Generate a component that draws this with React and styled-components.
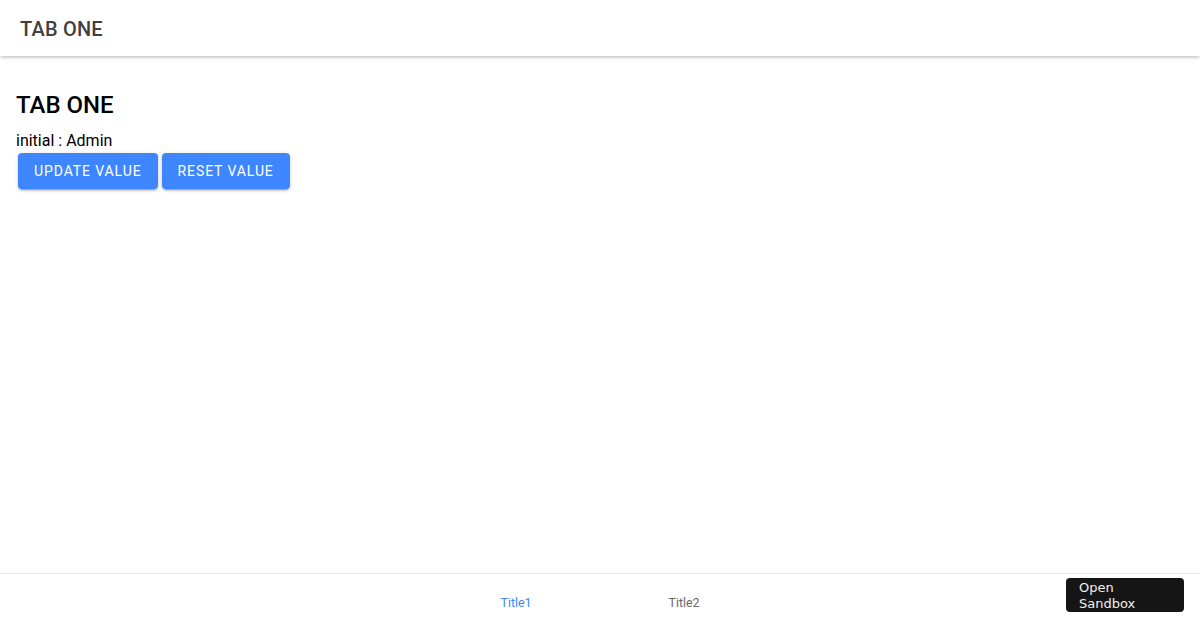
import React from "react";
import styled, { createGlobalStyle } from "styled-components";

const Global = createGlobalStyle`
  html, body { margin: 0; padding: 0; height: 100%; }
  body { font-family: Roboto, "Liberation Sans", sans-serif; background: #fff; color: #000; }
  #root { height: 100%; }
`;

const Page = styled.div`
  height: 630px;
  display: flex;
  flex-direction: column;
  position: relative;
  overflow: hidden;
`;

const Header = styled.header`
  height: 56px;
  flex: none;
  display: flex;
  align-items: center;
  padding: 0 20px;
  background: #fff;
  box-shadow: 0 2px 4px -1px rgba(0,0,0,0.2), 0 1px 3px 0 rgba(0,0,0,0.12);
  position: relative;
  z-index: 1;
`;

const HeaderTitle = styled.div`
  font-size: 20px;
  font-weight: 500;
  color: #404040;
  letter-spacing: 0.01em;
  padding-top: 1px;
`;

const Content = styled.main`
  flex: 1;
  padding: 33px 16px 0;
`;

const Heading = styled.h2`
  margin: 0 0 8px;
  font-size: 24px;
  font-weight: 500;
  line-height: 32px;
  color: #000;
`;

const Info = styled.div`
  font-size: 16px;
  line-height: 24px;
`;

const Actions = styled.div`
  display: flex;
  gap: 4px;
  padding-left: 2px;
`;

const Button = styled.button`
  height: 36px;
  padding: 6px 16px;
  border: none;
  border-radius: 4px;
  background: #3d86fe;
  color: #fff;
  font-family: Roboto, "Liberation Sans", sans-serif;
  font-size: 14px;
  font-weight: 400;
  letter-spacing: 0.9px;
  text-transform: uppercase;
  box-shadow: 0 3px 1px -2px rgba(0,0,0,0.2), 0 2px 2px 0 rgba(0,0,0,0.14), 0 1px 5px 0 rgba(0,0,0,0.12);
  cursor: pointer;
`;

const BottomNav = styled.nav`
  height: 56px;
  flex: none;
  border-top: 1px solid #e8e8e8;
  display: flex;
  justify-content: center;
`;

const NavItem = styled.button`
  flex: 1;
  max-width: 168px;
  min-width: 80px;
  background: none;
  border: none;
  display: flex;
  align-items: center;
  justify-content: center;
  padding-top: 2px;
  font-family: Roboto, "Liberation Sans", sans-serif;
  font-size: 12.4px;
  color: ${p => (p.$active ? "#3d86fe" : "#666")};
`;

const SandboxButton = styled.a`
  position: absolute;
  left: 1066px;
  top: 578px;
  width: 118px;
  height: 34px;
  box-sizing: border-box;
  padding: 2px 13px 0;
  background: #151515;
  border-radius: 4px;
  color: #f0f0f0;
  font-family: "DejaVu Sans", sans-serif;
  font-size: 13px;
  line-height: 16px;
  text-decoration: none;
`;

export default function App() {
  return (
    <Page>
      <Global />
      <Header>
        <HeaderTitle>TAB ONE</HeaderTitle>
      </Header>
      <Content>
        <Heading>TAB ONE</Heading>
        <Info>initial : Admin</Info>
        <Actions>
          <Button>Update Value</Button>
          <Button>Reset Value</Button>
        </Actions>
      </Content>
      <BottomNav>
        <NavItem $active>Title1</NavItem>
        <NavItem>Title2</NavItem>
      </BottomNav>
      <SandboxButton>Open<br />Sandbox</SandboxButton>
    </Page>
  );
}
